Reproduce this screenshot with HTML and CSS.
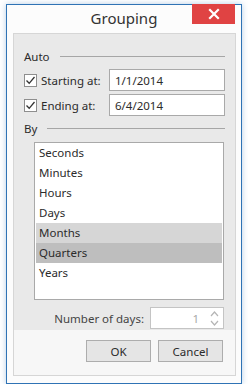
FILE: index.html
```html
<!DOCTYPE html>
<html>
<head>
<meta charset="utf-8">
<link rel="stylesheet" href="styles.css">
</head>
<body>
<div class="window">
  <div class="titlebar">
    <span class="title">Grouping</span>
    <div class="close"><svg width="12" height="12" viewBox="0 0 12 12"><path d="M2 2 L10 10 M10 2 L2 10" stroke="#fff" stroke-width="2.2" stroke-linecap="square"/></svg></div>
  </div>
  <div class="panel">
    <div class="content">
      <div class="group-header"><span>Auto</span><div class="rule"></div></div>
      <div class="field-row first">
        <label class="check"><span class="box"><svg width="11" height="11" viewBox="0 0 11 11"><path d="M1.5 5.5 L4.2 8.3 L9.5 2" fill="none" stroke="#333" stroke-width="1.3"/></svg></span>Starting at:</label>
        <div class="input">1/1/2014</div>
      </div>
      <div class="field-row">
        <label class="check"><span class="box"><svg width="11" height="11" viewBox="0 0 11 11"><path d="M1.5 5.5 L4.2 8.3 L9.5 2" fill="none" stroke="#333" stroke-width="1.3"/></svg></span>Ending at:</label>
        <div class="input">6/4/2014</div>
      </div>
      <div class="group-header by"><span>By</span><div class="rule"></div></div>
      <div class="listbox">
        <div class="item">Seconds</div>
        <div class="item">Minutes</div>
        <div class="item">Hours</div>
        <div class="item">Days</div>
        <div class="item sel-light">Months</div>
        <div class="item sel-dark">Quarters</div>
        <div class="item">Years</div>
      </div>
      <div class="days-row">
        <span class="days-label">Number of days:</span>
        <div class="spinner">
          <span class="spin-val">1</span>
          <svg class="spin-arrows" width="9" height="17" viewBox="0 0 9 17"><path d="M1 6 L4.5 2 L8 6 M1 11 L4.5 15 L8 11" fill="none" stroke="#b5b5b5" stroke-width="1.2"/></svg>
        </div>
      </div>
    </div>
    <div class="footer">
      <div class="btn">OK</div>
      <div class="btn">Cancel</div>
    </div>
  </div>
</div>
</body>
</html>
```
FILE: styles.css
```css
html, body {
  margin: 0;
  padding: 0;
  background: #ffffff;
}
body {
  font-family: "Noto Sans", "Open Sans", sans-serif;
  font-size: 11.5px;
  color: #2b2b2b;
}
.window {
  margin: 4px 0 0 6px;
  width: 234px;
  height: 378px;
  border: 1px solid #2f73b5;
  background: #fcfcfc;
  box-shadow: 0 0 6px rgba(47, 115, 181, 0.35);
  display: flex;
  flex-direction: column;
}
.titlebar {
  position: relative;
  height: 28px;
  display: flex;
  align-items: center;
  justify-content: center;
}
.title {
  font-size: 15px;
  color: #333;
  margin-top: -2px;
}
.close {
  position: absolute;
  top: -1px;
  right: 6px;
  width: 43px;
  height: 20px;
  background: #e04343;
  display: flex;
  align-items: center;
  justify-content: center;
}
.panel {
  margin: 0 5px 7px 6px;
  border: 1px solid #d6d6d6;
  flex: 1;
  display: flex;
  flex-direction: column;
}
.content {
  background: #e9e9e9;
  padding: 14px 10px 2px 10px;
  height: 280px;
}
.group-header {
  display: flex;
  align-items: center;
  height: 16px;
}
.group-header .rule {
  flex: 1;
  height: 1px;
  background: #a6a6a6;
  margin-left: 10px;
}
.group-header.by {
  margin-top: 4px;
}
.field-row {
  display: flex;
  align-items: center;
  height: 22px;
  margin-top: 3px;
}
.field-row.first {
  margin-top: 5px;
}
.check {
  display: flex;
  align-items: center;
  width: 85px;
}
.box {
  width: 11px;
  height: 11px;
  border: 1px solid #8e8e8e;
  background: #fff;
  margin-right: 4px;
  display: flex;
}
.input {
  flex: 1;
  height: 20px;
  border: 1px solid #a9a9a9;
  background: #fff;
  display: flex;
  align-items: center;
  padding-left: 5px;
}
.listbox {
  margin: 6px 1px 0 10px;
  height: 156px;
  border: 1px solid #a9a9a9;
  background: #fff;
  padding: 0 1px;
}
.item {
  height: 20px;
  line-height: 20px;
  padding-left: 3px;
}
.sel-light {
  background: #d6d6d6;
}
.sel-dark {
  background: #bebebe;
}
.days-row {
  display: flex;
  align-items: center;
  justify-content: flex-end;
  margin: 7px 1px 0 0;
  height: 22px;
}
.days-label {
  margin-right: 6px;
  color: #444;
}
.spinner {
  width: 72px;
  height: 20px;
  border: 1px solid #c4c4c4;
  background: #fff;
  display: flex;
  align-items: center;
  justify-content: flex-end;
}
.spin-val {
  color: #a8a8a8;
  margin-right: 11px;
}
.spin-arrows {
  margin-right: 4px;
}
.footer {
  flex: 1;
  background: #f7f7f7;
  display: flex;
  justify-content: flex-end;
  align-items: flex-start;
  padding: 10px 12px 0 0;
  gap: 7px;
}
.btn {
  width: 63px;
  height: 20px;
  border: 1px solid #adadad;
  background: #e5e5e5;
  display: flex;
  align-items: center;
  justify-content: center;
}
```
